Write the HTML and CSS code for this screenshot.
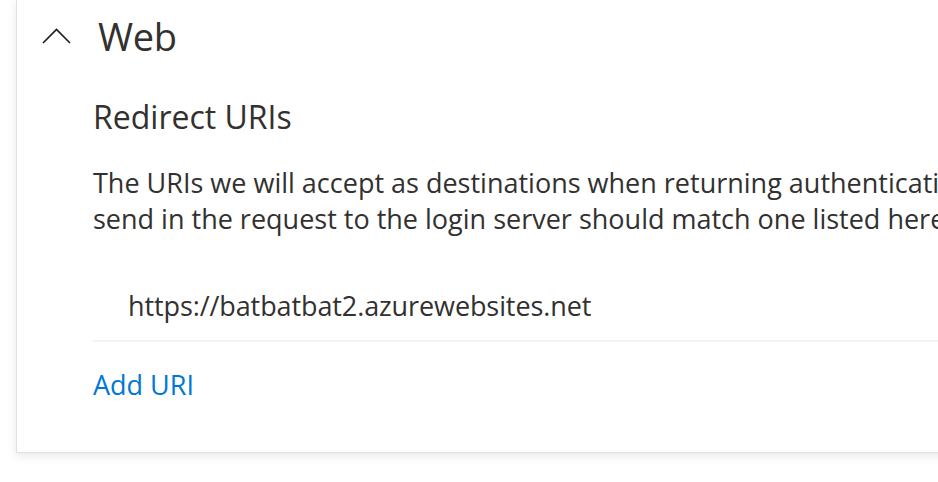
FILE: index.html
```html
<!DOCTYPE html>
<html>
<head>
<meta charset="utf-8">
<link rel="stylesheet" href="styles.css">
</head>
<body>
<div class="page">
  <section class="card">
    <div class="card-header">
      <svg class="chevron" width="31" height="18" viewBox="0 0 31 18"><polyline points="2,16 15.5,2.5 29,16" fill="none" stroke="#201f1e" stroke-width="1.7"/></svg>
      <h2 class="card-title">Web</h2>
    </div>
    <div class="card-body">
      <h3 class="sub-title">Redirect URIs</h3>
      <p class="desc"><span class="line">The URIs we will accept as destinations when returning authentication tokens after successfully authenticating users. The redirect URI you</span><span class="line">send in the request to the login server should match one listed here. Also referred to as reply URLs.</span></p>
      <div class="uri-row">https://batbatbat2.azurewebsites.net</div>
      <a class="add-link" href="#">Add URI</a>
    </div>
  </section>
</div>
</body>
</html>
```

FILE: styles.css
```css
html, body {
  margin: 0;
  padding: 0;
  background: #ffffff;
  overflow: hidden;
}
body {
  width: 938px;
  height: 482px;
  font-family: "Open Sans", "Noto Sans", sans-serif;
  color: #323130;
}
.page {
  padding: 0 0 0 16px;
}
.card {
  width: 1400px;
  height: 453px;
  box-sizing: border-box;
  background: #fff;
  border-left: 1px solid #e3e1df;
  border-bottom: 1px solid #e3e1df;
  box-shadow: 0 3px 9px rgba(0,0,0,0.09);
}
.card-header {
  display: flex;
  align-items: center;
  height: 72px;
  padding-left: 24px;
}
.chevron {
  display: block;
}
.card-title {
  margin: 0 0 0 26px;
  font-size: 38px;
  font-weight: 400;
  letter-spacing: -0.3px;
  line-height: 38px;
}
.card-body {
  padding-left: 76px;
}
.sub-title {
  margin: 29px 0 0;
  font-size: 32px;
  font-weight: 400;
  line-height: 32px;
  letter-spacing: 0;
}
.desc {
  margin: 32px 0 0;
  font-size: 27px;
  line-height: 36px;
}
.line {
  display: block;
  white-space: nowrap;
}
.uri-row {
  margin-top: 51px;
  padding: 0 0 17px 35px;
  font-size: 27px;
  line-height: 35px;
  letter-spacing: -0.1px;
  border-bottom: 2px solid #f3f2f1;
}
.add-link {
  display: inline-block;
  margin-top: 25px;
  font-size: 27px;
  line-height: 35px;
  color: #0078d4;
  text-decoration: none;
}
```
